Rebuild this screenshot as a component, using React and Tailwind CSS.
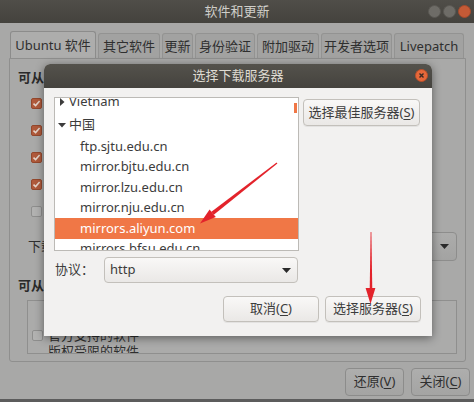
import React from "react";

const font = "font-['Noto_Sans','Noto_Sans_CJK_SC',sans-serif]";

function Mn({ children }) {
  return <span className="underline underline-offset-2 decoration-1">{children}</span>;
}

function BgCheck({ checked }) {
  return checked ? (
    <div className="w-[11px] h-[11px] rounded-[2px] bg-[#b05a3b] border border-[#94482d] flex items-center justify-center">
      <svg width="9" height="9" viewBox="0 0 9 9">
        <path d="M1.5 4.6 L3.6 6.6 L7.6 2" stroke="#e6d6cc" strokeWidth="1.5" fill="none" />
      </svg>
    </div>
  ) : (
    <div className="w-[11px] h-[11px] rounded-[2px] bg-[#b2b2b1] border border-[#8e8e8d]" />
  );
}

const tabs = [
  ["Ubuntu 软件", "w-[86px]", true],
  ["其它软件", "w-[62px]"],
  ["更新", "w-[31px]"],
  ["身份验证", "w-[60px]"],
  ["附加驱动", "w-[62px]"],
  ["开发者选项", "w-[71px]"],
  ["Livepatch", "w-[70px]"],
];

function MainWindow() {
  return (
    <div className="w-full h-full flex flex-col bg-[#a8a8a7]">
      {/* title bar */}
      <div className="h-[23px] shrink-0 bg-gradient-to-b from-[#504e49] to-[#44423d] flex items-center relative">
        <div className="flex-1 text-center text-[13px] leading-[23px] text-[#cfcec9]">软件和更新</div>
        <div className="absolute right-[3px] top-[5px] flex gap-[2px]">
          <div className="w-[13px] h-[13px] rounded-full bg-[#6e6c67] border border-[#5a5853]" />
          <div className="w-[13px] h-[13px] rounded-full bg-[#6e6c67] border border-[#5a5853]" />
          <div className="w-[13px] h-[13px] rounded-full bg-[#c45a36] border border-[#a44a2c]" />
        </div>
      </div>

      <div className="flex-1 flex flex-col px-[4px]">
        {/* tabs */}
        <div className="flex items-end gap-[2px] mt-[8px] pl-[6px] h-[27px]">
          {tabs.map(([t, w, active]) => (
            <div
              key={t}
              className={
                w +
                " text-center text-[13px] text-[#2f2f2f] rounded-t-[3px] border border-b-0 " +
                (active
                  ? "h-[27px] leading-[27px] bg-[#adadac] border-[#8c8c8b]"
                  : "h-[25px] leading-[25px] bg-[#a2a2a1] border-[#939392]")
              }
            >
              {t}
            </div>
          ))}
        </div>

        {/* notebook page */}
        <div className="ml-[5px] w-[457px] h-[304px] border border-[#8f8f8e] rounded-b-[3px] flex flex-col pl-[8px] pr-[8px] bg-[#a9a9a8]">
          <div className="mt-[8px] text-[13px] leading-[20px] font-bold text-[#2a2a2a]">可从互联网下载</div>
          <div className="flex flex-col mt-[3px] pl-[13px]">
            {[
              ["Canonical 支持的免费和开源软件 (main)", true],
              ["社区维护的免费和开源软件 (universe)", true],
              ["设备的专有驱动 (restricted)", true],
              ["有版权和合法性问题的软件 (multiverse)", true],
              ["源代码", false],
            ].map(([t, c]) => (
              <div key={t} className="h-[27px] flex items-center gap-[7px] text-[13px] text-[#2f2f2f]">
                <BgCheck checked={c} />
                <span>{t}</span>
              </div>
            ))}
          </div>
          <div className="mt-[7px] h-[29px] flex items-center">
            <span className="pl-[10px] text-[13px] text-[#2f2f2f] w-[90px]">下载自：</span>
            <div className="flex-1 h-[29px] rounded-[4px] border border-[#8d8d8c] bg-gradient-to-b from-[#acacab] to-[#a3a3a2] flex items-center justify-end pr-[7px]">
              <svg width="9" height="5" viewBox="0 0 9 5">
                <path d="M0 0 H9 L4.5 5 Z" fill="#2a2a2a" />
              </svg>
            </div>
          </div>
          <div className="mt-[14px] text-[13px] leading-[20px] font-bold text-[#2a2a2a]">可从光盘安装</div>
          <div className="mt-[5px] ml-[9px] h-[54px] border border-[#8f8f8e] bg-[#ababaa] overflow-hidden pl-[4px] pt-[26px]">
            <div className="flex gap-[5px] items-start">
              <div className="mt-[3px]"><BgCheck checked={false} /></div>
              <div className="text-[13px] leading-[16px] text-[#2f2f2f]">
                <div>官方支持的软件</div>
                <div>版权受限的软件</div>
              </div>
            </div>
          </div>
        </div>

        {/* bottom buttons */}
        <div className="mt-[6px] flex justify-end gap-[7px]">
          <div className="w-[59px] h-[28px] rounded-[4px] border border-[#8c8c8b] bg-gradient-to-b from-[#aeaead] to-[#a4a4a3] text-[13px] text-[#2f2f2f] flex items-center justify-center">
            还原(<Mn>V</Mn>)
          </div>
          <div className="w-[59px] h-[28px] rounded-[4px] border border-[#8c8c8b] bg-gradient-to-b from-[#aeaead] to-[#a4a4a3] text-[13px] text-[#2f2f2f] flex items-center justify-center">
            关闭(<Mn>C</Mn>)
          </div>
        </div>
      </div>
      <div className="h-[3px] shrink-0 bg-[#5c5c5c]" />
    </div>
  );
}

function Btn({ className, children }) {
  return (
    <div
      className={
        "rounded-[4px] border border-[#c3c0bb] bg-gradient-to-b from-[#f9f8f7] to-[#eae8e6] text-[13px] text-[#3c3c3c] flex items-center justify-center shadow-[0_1px_0_rgba(0,0,0,0.06)] " +
        className
      }
    >
      {children}
    </div>
  );
}

function Tri({ down }) {
  return down ? (
    <svg width="8" height="8" viewBox="0 0 8 8">
      <path d="M0 2 H8 L4 6.5 Z" fill="#3c3c3c" />
    </svg>
  ) : (
    <svg width="8" height="8" viewBox="0 0 8 8">
      <path d="M2 0 V8 L6.5 4 Z" fill="#3c3c3c" />
    </svg>
  );
}

const mirrors = [
  "ftp.sjtu.edu.cn",
  "mirror.bjtu.edu.cn",
  "mirror.lzu.edu.cn",
  "mirror.nju.edu.cn",
  "mirrors.aliyun.com",
  "mirrors.bfsu.edu.cn",
  "mirrors.cn99.com",
];

function Dialog() {
  return (
    <div className="absolute left-[44px] top-[64px] w-[388px] h-[272px] rounded-t-[6px] overflow-hidden flex flex-col bg-[#f2f1f0] shadow-[0_2px_10px_rgba(0,0,0,0.45)]">
      <div className="h-[24px] shrink-0 bg-gradient-to-b from-[#54524c] to-[#45433e] relative flex items-center justify-center">
        <span className="text-[13px] text-[#dfdbd2]">选择下载服务器</span>
        <div className="absolute right-[4px] top-[5px] w-[13px] h-[13px] rounded-full bg-[#e6683a] border border-[#b94f2a] flex items-center justify-center">
          <svg width="7" height="7" viewBox="0 0 7 7">
            <path d="M1.5 1.5 L5.5 5.5 M5.5 1.5 L1.5 5.5" stroke="#3a2a24" strokeWidth="1.4" />
          </svg>
        </div>
      </div>

      <div className="flex-1 flex flex-col pl-[10px] pr-[11px] pt-[9px]">
        <div className="flex items-start">
          <div className="w-[245px] h-[154px] border border-[#bcbab6] bg-white overflow-hidden relative">
            <div className="mt-[-7px] flex flex-col text-[13px] text-[#3c3c3c]">
              <div className="h-[22px] flex items-center">
                <div className="w-[14px] pl-[3px] flex items-center"><Tri /></div>
                <span>Vietnam</span>
              </div>
              <div className="h-[23px] flex items-center">
                <div className="w-[14px] pl-[3px] flex items-center"><Tri down /></div>
                <span>中国</span>
              </div>
              {mirrors.map((m) => (
                <div
                  key={m}
                  className={
                    "h-[20.5px] flex items-center pl-[25px] " +
                    (m === "mirrors.aliyun.com" ? "bg-[#f07746] text-white" : "")
                  }
                >
                  {m}
                </div>
              ))}
            </div>
            <div className="absolute right-[1px] top-[5px] w-[3px] h-[10px] bg-[#f07746]" />
          </div>
          <Btn className="ml-[4px] mt-[2px] w-[117px] h-[27px]">
            选择最佳服务器(<Mn>S</Mn>)
          </Btn>
        </div>

        <div className="mt-[6px] flex items-center">
          <span className="w-[50px] pl-[1px] text-[13px] text-[#3c3c3c]">协议：</span>
          <div className="w-[194px] h-[26px] rounded-[4px] border border-[#c3c0bb] bg-gradient-to-b from-[#f9f8f7] to-[#eae8e6] flex items-center justify-between pl-[5px] pr-[6px] text-[13px] text-[#3c3c3c]">
            <span>http</span>
            <svg width="9" height="5" viewBox="0 0 9 5">
              <path d="M0 0 H9 L4.5 5 Z" fill="#2a2a2a" />
            </svg>
          </div>
        </div>

        <div className="mt-[13px] flex justify-end gap-[6px]">
          <Btn className="w-[96px] h-[26px]">
            取消(<Mn>C</Mn>)
          </Btn>
          <Btn className="w-[96px] h-[26px]">
            选择服务器(<Mn>S</Mn>)
          </Btn>
        </div>
      </div>
    </div>
  );
}

function Arrows() {
  return (
    <svg className="absolute inset-0 pointer-events-none" width="474" height="402" viewBox="0 0 474 402">
      {/* diagonal pointer */}
      <polygon points="277.4,163.5 276.6,162.5 211.4,211.7 213.8,214.7" fill="#e3232b" />
      <polygon points="200,223.5 209.6,209.4 215.8,217.1" fill="#e3232b" />
      {/* vertical pointer */}
      <polygon points="370.6,232 371.4,232 372.3,290 369.7,290" fill="#e3232b" />
      <polygon points="370.5,304 365.6,288 375.4,288" fill="#e3232b" />
    </svg>
  );
}

export default function App() {
  return (
    <div className={"w-[474px] h-[402px] relative overflow-hidden " + font}>
      <MainWindow />
      <Dialog />
      <Arrows />
    </div>
  );
}
